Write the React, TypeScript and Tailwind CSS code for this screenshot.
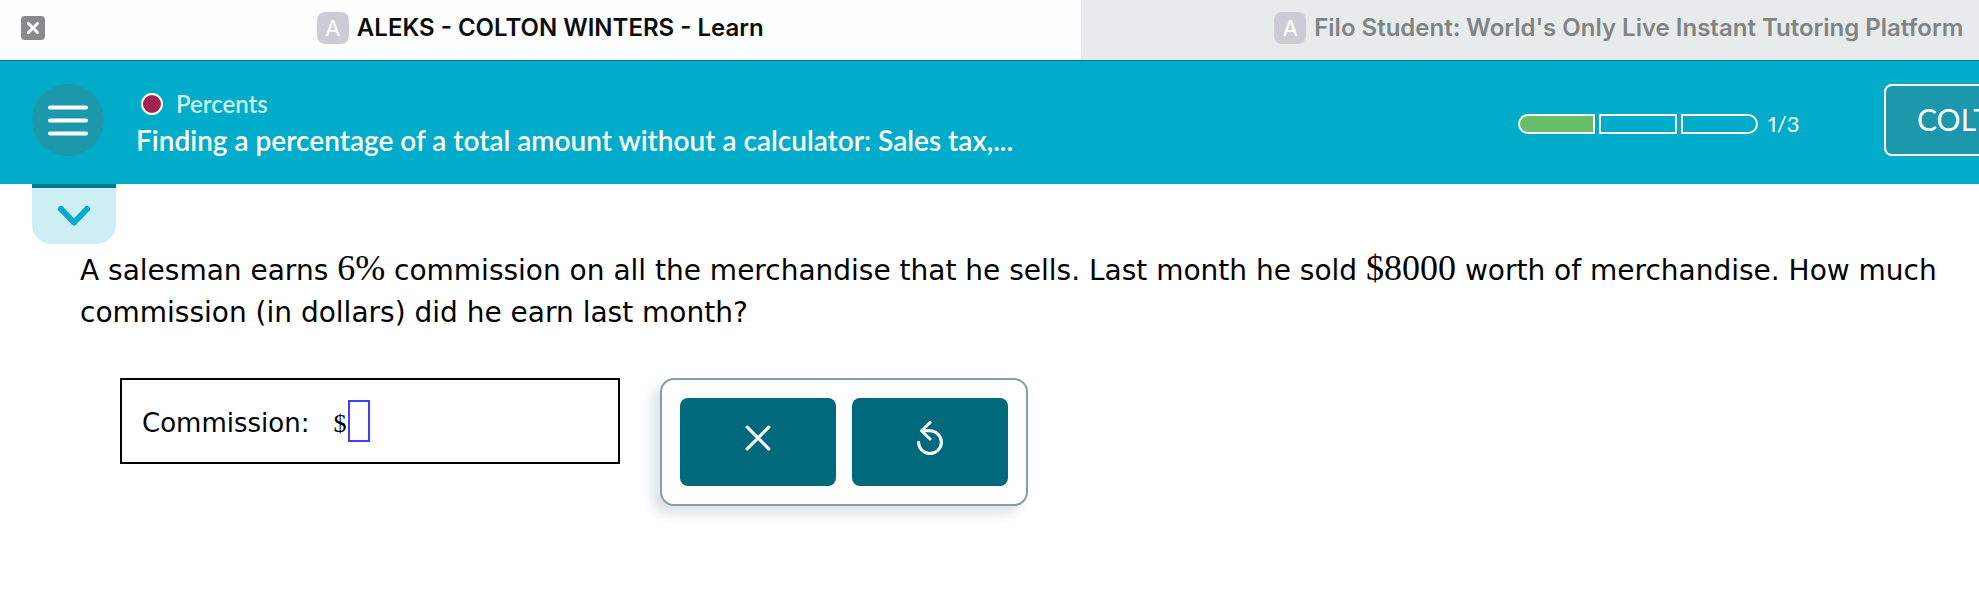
import { useState } from "react";

function TabBadge() {
  return (
    <span
      aria-hidden="true"
      className="flex size-8 shrink-0 items-center justify-center rounded-lg bg-[#cdccd6] text-[22px] leading-none font-normal text-white"
    >
      A
    </span>
  );
}

function BrowserTabs() {
  return (
    <nav aria-label="Open tabs" className="flex h-[60px] overflow-hidden font-[Inter,sans-serif] text-2xl font-semibold">
      <div className="flex w-[54.6%] shrink-0 items-center bg-[#fdfefe] px-[21px] pb-1">
        <button type="button" aria-label="Close tab" className="flex size-6 items-center justify-center rounded bg-[#868b8b]">
          <svg viewBox="0 0 24 24" className="size-6" fill="none" stroke="#fff" strokeWidth="3" strokeLinecap="round">
            <path d="M7.5 7.5l9 9M16.5 7.5l-9 9" />
          </svg>
        </button>
        <a href="#aleks" className="flex flex-1 items-center justify-center gap-2 pr-6 whitespace-nowrap text-[#0c0d0d]">
          <TabBadge />
          ALEKS - COLTON WINTERS - Learn
        </a>
      </div>
      <a
        href="#filo"
        className="flex w-[54.6%] shrink-0 items-center justify-center gap-2 bg-[#e8ebeb] pr-1 pb-1 whitespace-nowrap text-[#7f8584]"
      >
        <TabBadge />
        Filo Student: World&#39;s Only Live Instant Tutoring Platform
      </a>
    </nav>
  );
}

function Header() {
  return (
    <header className="flex items-start overflow-hidden border-t border-[#017a8f] bg-[#00acca] pt-[23px] pb-5 pl-8 font-[Lato,sans-serif] text-white">
      <button type="button" aria-label="Menu" className="flex size-[72px] shrink-0 items-center justify-center rounded-full bg-[#1c97ab]">
        <svg viewBox="0 0 40 32" className="h-8 w-10" fill="none" stroke="#fff" strokeWidth="4" strokeLinecap="round">
          <path d="M2 3.5h36M2 16.5h36M2 29.5h36" />
        </svg>
      </button>
      <div className="min-w-0 flex-1 pl-8">
        <div className="flex h-10 items-center gap-[13px] pl-[5px] text-2xl font-semibold text-[#cdeef3]">
          <span className="size-[22px] rounded-full border-2 border-white bg-[#a5214f]" />
          Percents
        </div>
        <h1 className="truncate text-[28px] leading-8 font-semibold">
          Finding a percentage of a total amount without a calculator: Sales tax,...
        </h1>
      </div>
      <div className="flex h-20 shrink-0 items-center gap-[10px]">
        <div
          role="progressbar"
          aria-label="Progress"
          aria-valuenow={1}
          aria-valuemin={0}
          aria-valuemax={3}
          className="flex h-5 w-60 gap-1"
        >
          <span className="flex-1 rounded-l-full border-2 border-white bg-[#66be6a]" />
          <span className="flex-1 border-2 border-white" />
          <span className="flex-1 rounded-r-full border-2 border-white" />
        </div>
        <span className="w-[116px] pb-[2px] text-[22px] proportional-nums">1/3</span>
      </div>
      <button
        type="button"
        className="h-[72px] w-[95px] shrink-0 overflow-hidden rounded-l-lg border-2 border-r-0 border-white bg-[#1c97ab] pb-[2px] pl-[31px] text-left text-[30px]"
      >
        COLTON
      </button>
    </header>
  );
}

function Keypad({ onClear }: { onClear: () => void }) {
  const key = "flex h-22 w-39 items-center justify-center rounded-lg bg-[#00697c] pb-2";
  return (
    <div className="flex gap-4 rounded-[14px] border-2 border-[#839fa8] bg-white p-[18px] shadow-[-8px_8px_12px_#dde4e7]">
      <button type="button" aria-label="Clear" onClick={onClear} className={key}>
        <svg viewBox="0 0 26 26" className="size-[26px]" fill="none" stroke="#fff" strokeWidth="3.2" strokeLinecap="round">
          <path d="M2.2 2.2l21.6 21.6M23.8 2.2L2.2 23.8" />
        </svg>
      </button>
      <button type="button" aria-label="Undo" onClick={onClear} className={key}>
        <svg
          viewBox="0 0 26 34"
          className="h-[34px] w-[26px]"
          fill="none"
          stroke="#fff"
          strokeWidth="3"
          strokeLinecap="round"
          strokeLinejoin="round"
        >
          <path d="M1.6 21.2A11.4 11.4 0 1 0 13 9.8H5" />
          <path d="M13 1.6L4.6 9.8L13 18" />
        </svg>
      </button>
    </div>
  );
}

export default function App() {
  const [answer, setAnswer] = useState("");
  const math = "font-['Liberation_Serif',serif] text-4xl leading-none";
  return (
    <div className="min-h-screen bg-white text-black">
      <BrowserTabs />
      <Header />
      <main className="font-['DejaVu_Sans',sans-serif]">
        <button
          type="button"
          aria-label="Show more"
          className="ml-8 flex h-15 w-21 items-center justify-center rounded-b-[20px] border-t-4 border-[#017a8f] bg-[#cdeef3]"
        >
          <svg
            viewBox="0 0 32 20"
            className="h-5 w-8"
            fill="none"
            stroke="#00acca"
            strokeWidth="6"
            strokeLinecap="round"
            strokeLinejoin="round"
          >
            <path d="M3 3l13 13.5L29 3" />
          </svg>
        </button>
        <p className="pt-[6px] pr-4 pl-20 text-[28px] leading-[42px]">
          A salesman earns <span className={math}>6%</span> commission on all the merchandise that he sells. Last month he sold{" "}
          <span className={math}>$8000</span> worth of merchandise. How much commission (in dollars) did he earn last month?
        </p>
        <div className="flex items-start gap-10 pt-11 pl-30">
          <div className="flex h-[86px] w-[500px] items-center gap-[2px] border-2 border-black pl-5">
            <label htmlFor="commission" className="flex items-center pt-[5px] text-[26px]">
              Commission:
              <span className="pl-6 font-['Liberation_Serif',serif]">$</span>
            </label>
            <input
              id="commission"
              value={answer}
              onChange={(e) => setAnswer(e.target.value)}
              className="h-[42px] w-[22px] border-2 border-[#3f3fff] font-['Liberation_Serif',serif] text-[26px] outline-none"
            />
          </div>
          <Keypad onClear={() => setAnswer("")} />
        </div>
      </main>
    </div>
  );
}
